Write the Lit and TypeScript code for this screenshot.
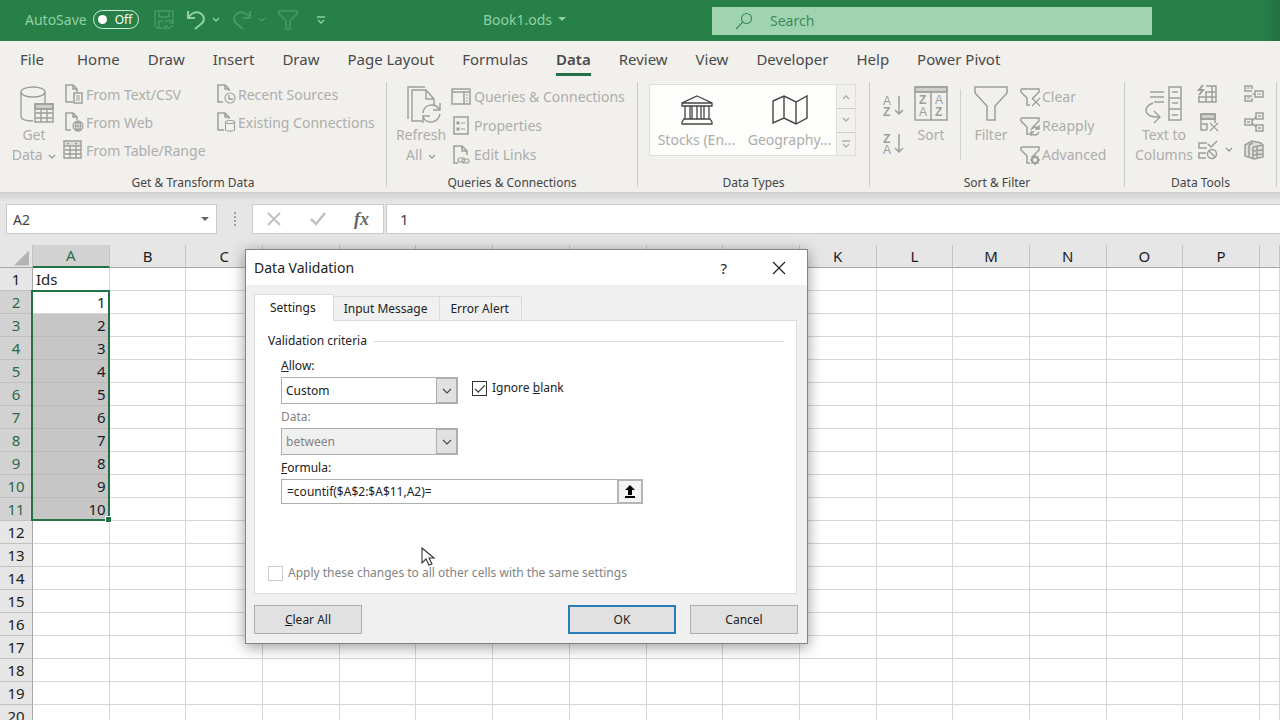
import { LitElement, html, svg, css, nothing } from "lit";
import { customElement, property } from "lit/decorators.js";

const funnelSmall = svg`<path stroke-width="1.500" d="M1 2h18v3l-6 6v2M1 2v3l6 6v7h3"/>`;

const ICONS: Record<string, { w: number; h: number; art: unknown }> = {
  save: { w: 20, h: 20, art: svg`<path stroke-width="1.500" d="M9 18H3l-2-2V1h18v7M5 1v6h10V1M5 18v-7h4M11 13a4 4 0 0 1 7-1M19 9v4h-4M18 15a4 4 0 0 1-7 2M11 20v-4h3"/>` },
  undo: { w: 20, h: 21, art: svg`<path stroke-width="2" d="M2 2v7h7M2 9c3-5 8-7 12-5 5 3 5 8 1 11l-6 5"/>` },
  redo: { w: 20, h: 21, art: svg`<path stroke-width="2" d="M18 2v7h-7M18 9c-3-5-8-7-12-5-5 3-5 8-1 11l6 5"/>` },
  funnel: { w: 20, h: 20, art: svg`<path stroke-width="1.5" d="M1 1h18v3l-7 7v8H8v-8L1 4z"/>` },
  chevron: { w: 8, h: 6, art: svg`<path stroke-width="1.4" d="M1 1l3 3 3-3"/>` },
  chevronUp: { w: 8, h: 6, art: svg`<path stroke-width="1.4" d="M1 5l3-3 3 3"/>` },
  drop: { w: 10, h: 6, art: svg`<path d="M1 1l4 4 4-4"/>` },
  overflow: { w: 10, h: 8, art: svg`<path stroke-width="1.3" d="M1 1h8M2 4l3 3 3-3"/>` },
  caret: { w: 8, h: 5, art: svg`<path fill="currentColor" stroke="none" d="M0 0h8L4 4z"/>` },
  search: { w: 18, h: 18, art: svg`<circle cx="11.500" cy="6.500" r="5"/><path d="M8 10l-7 7"/>` },
  getData: { w: 34, h: 38, art: svg`<g stroke-width="1.400"><ellipse cx="13" cy="6" rx="12" ry="5"/><path d="M1 6v25c1 3 6 4 12 4M25 6v12"/><path fill="#cfcfcd" d="M15 18h18v5H15z"/><path d="M15 18h18v18H15zM15 23h18M15 27h18M15 32h18M21 23v13M27 23v13"/></g>` },
  textFile: { w: 20, h: 20, art: svg`<path stroke-width="1.500" d="M9 18H2V1h7l4 4v3M9 1v4h4"/><path stroke-width="1.500" d="M10 9h8v10h-8z"/><path d="M12 12h4M12 14h4M12 16h4"/>` },
  webFile: { w: 20, h: 20, art: svg`<path stroke-width="1.500" d="M7 18H2V1h7l4 4v3M9 1v4h4"/><circle cx="14" cy="14" r="5"/><path d="M9 14h10M14 9v10M10 11h8M10 17h8"/><ellipse cx="14" cy="14" rx="2.500" ry="5"/>` },
  tableRange: { w: 20, h: 20, art: svg`<path fill="#dededc" stroke="none" d="M0 1h17v5H0z"/><path stroke-width="1.400" d="M0 1h17v17H0zM0 6h17M0 10h17M0 14h17M6 6v12M12 6v12"/><path d="M3 3l1 1 1-1M11 3l1 1 1-1"/>` },
  recent: { w: 20, h: 20, art: svg`<path stroke-width="1.500" d="M7 18H2V1h7l4 4v2M9 1v4h4"/><circle cx="14" cy="14" r="5"/><path stroke-width="1.400" d="M13 11v4h4"/>` },
  existing: { w: 20, h: 20, art: svg`<path stroke-width="1.500" d="M8 18H2V1h7l4 4v2M9 1v4h4"/><ellipse cx="14" cy="10" rx="4.500" ry="1.500"/><path d="M9.500 10v8c1 1.500 8 1.500 9 0v-8"/>` },
  refresh: { w: 34, h: 38, art: svg`<g stroke-width="1.400"><path d="M1 33V1h17"/><path d="M15 35H5V4h14l8 9v6M19 4v9h8"/><path d="M16 27c1-9 12-11 17-3M33 17v7h-7M33 28c-2 9-13 11-17 3M16 37v-7h7"/></g>` },
  queries: { w: 20, h: 20, art: svg`<path stroke-width="1.500" d="M0 2h18v15H0zM0 5h18M12 5v12"/><path d="M14 8h2M14 11h2M14 14h2"/>` },
  properties: { w: 20, h: 20, art: svg`<path stroke-width="1.500" d="M2 1h14v17H2z"/><path fill="currentColor" d="M5 6h2v2H5zM5 12h2v2H5z"/><path d="M9 7h4M9 13h4"/>` },
  editLinks: { w: 20, h: 20, art: svg`<path stroke-width="1.500" d="M6 18H2V1h8l5 5v4M10 1v5h5"/><rect x="6" y="13" width="7" height="4" rx="2"/><rect x="10" y="14" width="7" height="4" rx="2"/>` },
  bank: { w: 34, h: 30, art: svg`<path stroke-width="1.300" d="M17 1l15 7v3H2V8zM2 8h30M5 11v13M10 11v13M12 11v13M17 11v13M21 11v13M24 11v13M29 11v13M4 24h26l2 3v2H2v-2z"/>` },
  map: { w: 36, h: 30, art: svg`<path stroke-width="1.400" d="M1 6l11-5 12 6 11-6v22l-11 6-12-6-11 5zM12 1v22M24 7v22"/>` },
  sortAsc: { w: 20, h: 22, art: svg`<text x="0" y="10">A</text><text class="strong" x="0" y="21">Z</text><path stroke-width="1.500" d="M16 1v18M12 15l4 4 4-4"/>` },
  sortDesc: { w: 20, h: 22, art: svg`<text class="strong" x="0" y="10">Z</text><text x="0" y="21">A</text><path stroke-width="1.500" d="M16 1v18M12 15l4 4 4-4"/>` },
  sort: { w: 34, h: 34, art: svg`<path fill="#cfcfcd" d="M1 1h32v5H1z"/><path stroke-width="1.500" d="M1 1h32v33H1zM1 6h32M17 6v28"/><text class="strong" x="5" y="18">Z</text><text x="5" y="30">A</text><text x="21" y="18">A</text><text class="strong" x="21" y="30">Z</text>` },
  filter: { w: 34, h: 36, art: svg`<path stroke-width="1.500" d="M1 1h32v6L21 20v14h-8V20L1 7z"/>` },
  clear: { w: 20, h: 20, art: svg`${funnelSmall}<path d="M12 11l8 8M20 11l-8 8"/>` },
  reapply: { w: 20, h: 20, art: svg`${funnelSmall}<path stroke-width="1.400" d="M11 14a4.500 4.500 0 0 1 8-1M19 9v4h-4M19 16a4.500 4.500 0 0 1-8 1M11 20v-4h3"/>` },
  advanced: { w: 20, h: 20, art: svg`${funnelSmall}<circle cx="15" cy="15" r="3" stroke-width="2"/><path stroke-width="1.500" d="M15 10v2M15 18v2M10 15h2M18 15h2M11.500 11.500l1 1M17.500 17.500l1 1M18.500 11.500l-1 1M12.500 17.500l-1 1"/>` },
  columns: { w: 38, h: 38, art: svg`<path stroke-width="1.500" d="M5 6h14M5 11h14M9 16h10"/><path stroke-width="1.400" d="M8 17c-10 4-10 14 5 14h2M9 25l6 6-6 6"/><path stroke-width="1.500" d="M24 1h12v33H24zM24 12h12M24 23h12M27 6h6M27 17h6M27 29h6"/>` },
  flashFill: { w: 20, h: 20, art: svg`<path stroke-width="1.500" d="M8 2h10v16H1v-6M14 2v16M8 8h10M8 7v11M1 13h17"/><path stroke-width="2" d="M5 1L1 6h4l-4 5"/>` },
  duplicates: { w: 20, h: 20, art: svg`<path fill="#cfcfcd" stroke-width="1.500" d="M3 2h14v5H3z"/><path stroke-width="1.500" d="M3 2h14v9M3 2v16h6M3 12h6v6M3 7h14"/><path d="M12 11l8 8M20 11l-8 8"/>` },
  validation: { w: 20, h: 20, art: svg`<path stroke-width="1.500" d="M9 3H1v5h8M8 13H1v5h7M10 4l3 3 6-6"/><circle cx="14" cy="14" r="4.500" stroke-width="1.400"/><path stroke-width="1.400" d="M11 11l6 6"/>` },
  consolidate: { w: 20, h: 20, art: svg`<path stroke-width="1.500" d="M8 5V2H1v5h7M8 12H1v5h7v-3M11 7h8v6h-8z"/><path d="M8 10h3M13 10h4M3 4h3M3 14h3"/>` },
  relations: { w: 20, h: 20, art: svg`<path stroke-width="1.500" d="M1 7h7v6H1zM12 1h7v6h-7zM12 13h7v6h-7zM8 9l4-4M8 11l4 4M3 10h3M14 4h3M14 16h3"/>` },
  model: { w: 20, h: 20, art: svg`<path fill="#dededc" stroke="none" d="M1 5l7-4 9 2 2 2v12l-9 2-9-3z"/><path stroke-width="1.500" d="M1 5l7-4 9 2 2 2v12l-9 2-9-3zM5 5v12M5 5l4-2M9 7l10-2M9 7v12M13 6v12M9 11l10-1M9 15l10-1"/>` },
  cross: { w: 16, h: 16, art: svg`<path stroke-width="2" d="M2 2l12 12M14 2L2 14"/>` },
  tick: { w: 18, h: 16, art: svg`<path stroke-width="2.500" d="M2 8l5 5L16 2"/>` },
  close: { w: 12, h: 12, art: svg`<path stroke-width="1.200" d="M0 0l12 12M12 0L0 12"/>` },
  collapse: { w: 12, h: 14, art: svg`<path fill="currentColor" stroke="none" d="M6 0l5 5H8v5H4V5H1zM1 11h10v2H1z"/>` },
  pointer: { w: 14, h: 20, art: svg`<path fill="#fff" stroke="#333" d="M1 1v15l4-4 3 6 3-1-3-6h5z"/>` },
};

const sharedStyles = css`
  :host, *, *::before, *::after { box-sizing: border-box; }
  button, input, select { font: inherit; color: inherit; margin: 0; }
  button { background: none; border: 0; padding: 0; }
`;

@customElement("x-icon")
export class XIcon extends LitElement {
  @property() name = "";
  static styles = css`
    :host { display: inline-flex; flex: none; }
    svg { display: block; overflow: visible; fill: none; stroke: currentColor; stroke-width: 1.1; }
    text { font: 12px "Liberation Sans", sans-serif; fill: currentColor; stroke: none; }
    .strong { font-weight: 700; }
  `;
  render() {
    const i = ICONS[this.name];
    return i ? html`<svg width=${i.w} height=${i.h} viewBox="0 0 ${i.w} ${i.h}" aria-hidden="true">${i.art}</svg>` : nothing;
  }
}

const icon = (name: string) => html`<x-icon name=${name}></x-icon>`;

@customElement("title-bar")
export class TitleBar extends LitElement {
  static styles = [sharedStyles, css`
    :host { display: grid; grid-template-columns: 483fr 229fr 440fr 128fr; align-items: center; height: 41px; flex: none; background: linear-gradient(to left, #236e40, #278048 16px); color: #8fd0a4; font-size: 14px; }
    .quick { display: flex; align-items: center; height: 39px; padding-left: 25px; align-self: start; }
    .quick .switch { display: flex; align-items: center; gap: 8px; width: 46px; height: 19px; margin: 0 15px 0 6px; padding: 0 0 0 4px; border: 1px solid #cdebd5; border-radius: 10px; color: #fff; font-size: 12px; }
    .knob { flex: none; width: 9px; height: 9px; border-radius: 50%; background: #fff; }
    .quick .dim { color: #459a64; }
    .quick button { display: flex; align-items: center; gap: 6px; margin-right: 12px; }
    .quick button:last-child { margin-left: 6px; }
    .file { display: flex; align-items: center; gap: 6px; height: 39px; align-self: start; }
    .search { display: flex; align-items: center; gap: 17px; height: 28px; padding-left: 23px; background: #a0d4b0; color: #3f8a5a; }
    .search input { flex: 1; min-width: 0; background: none; border: 0; outline: 0; padding: 0; }
    .search input::placeholder { color: #3f8a5a; opacity: 1; }
  `];
  render() {
    return html`
      <div class="quick">
        <span>AutoSave</span>
        <button class="switch" role="switch" aria-checked="false" aria-label="AutoSave"><span class="knob"></span>Off</button>
        <button class="dim" aria-label="Save">${icon("save")}</button>
        <button aria-label="Undo">${icon("undo")}${icon("chevron")}</button>
        <button class="dim" aria-label="Redo">${icon("redo")}${icon("chevron")}</button>
        <button class="dim" aria-label="Filter">${icon("funnel")}</button>
        <button aria-label="Customize">${icon("overflow")}</button>
      </div>
      <button class="file">Book1.ods ${icon("caret")}</button>
      <label class="search">${icon("search")}<input type="text" placeholder="Search" aria-label="Search" /></label>
    `;
  }
}

const TABS = ["File", "Home", "Draw", "Insert", "Draw", "Page Layout", "Formulas", "Data", "Review", "View", "Developer", "Help", "Power Pivot"];

@customElement("ribbon-bar")
export class RibbonBar extends LitElement {
  static styles = [sharedStyles, css`
    :host { display: block; flex: none; background: #f1f0ed; border-bottom: 1px solid #d0d0d0; }
    nav { display: flex; gap: 28px; height: 39px; padding: 5px 20px 0; font-size: 15px; color: #4a4a4a; }
    nav a { color: inherit; text-decoration: none; height: 30px; line-height: 27px; white-space: nowrap; }
    nav a:first-child { margin-right: 5px; }
    nav .on { font-weight: 600; border-bottom: 3px solid #217346; }
    .groups { display: grid; grid-template-columns: 387fr 251fr 232fr 255fr 152fr 3px; height: 112px; padding: 2px 0 5px; }
    .group { display: flex; flex-direction: column; min-width: 0; border-right: 1px solid #c9c9c7; }
    .body { display: flex; flex: 1; color: #adadab; font-size: 14px; }
    .caption { height: 16px; line-height: 16px; margin-bottom: -4px; text-align: center; font-size: 12px; color: #444; }
    .big { display: flex; flex-direction: column; align-items: center; align-self: flex-start; padding-top: 4px; line-height: 20px; white-space: nowrap; }
    .big x-icon { height: 38px; margin-bottom: 1px; align-items: flex-start; color: #9d9d9b; }
    .big .line x-icon { height: auto; margin: 0 0 2px 2px; }
    .menu > x-icon { margin-left: 6px; }
    .list { display: flex; flex-direction: column; white-space: nowrap; }
    .list button { display: flex; align-items: center; gap: 2px; height: 28px; }
    .list x-icon { color: #9d9d9b; }
    .loose button { height: 29px; }
    .transform .big { width: 44px; margin-left: 12px; }
    .transform .list { margin: -2px 0 0 8px; width: 152px; }
    .transform .list + .list { margin-left: 0; }
    .queries .big { width: 48px; margin-left: 10px; }
    .queries .list { margin-left: 7px; }
    .gallery { display: grid; grid-template-columns: 1fr 1fr 19px; flex: 1; height: 72px; margin: 2px 13px 0 11px; background: #fdfdfb; border: 1px solid #dddddb; }
    .gallery > button { display: flex; flex-direction: column; align-items: center; gap: 5px; padding-top: 10px; line-height: 20px; white-space: nowrap; }
    .gallery > button x-icon { color: #444; }
    .steps { display: grid; grid-template-rows: repeat(3, 1fr); background: #f1f0ed; border-left: 1px solid #dddddb; }
    .steps button { display: flex; align-items: center; justify-content: center; }
    .steps button + button { border-top: 1px solid #cfcfcd; }
    .order { display: flex; flex-direction: column; gap: 16px; padding: 13px 0 0 13px; color: #9d9d9b; }
    .order button { display: flex; height: 22px; }
    .sort { width: 34px; margin-left: 11px; }
    .filter { width: 34px; margin-left: 13px; }
    .rule { width: 1px; height: 71px; margin: 7px 0 0 12px; background: #d0d0ce; }
    .sorting .list { margin-left: 12px; }
    .tools .big { width: 56px; margin-left: 11px; }
    .tools .list { margin: -2px 0 0 6px; width: 46px; }
    .tools .list + .list { margin-left: 0; width: auto; }
    .tools .list button { gap: 7px; }
  `];

  private item(name: string, label: string) {
    return html`<button>${icon(name)}${label}</button>`;
  }

  render() {
    return html`
      <nav>${TABS.map((t) => html`<a href="#" class=${t === "Data" ? "on" : ""}>${t}</a>`)}</nav>
      <div class="groups">
        <section class="group transform">
          <div class="body">
            <button class="big menu">${icon("getData")}<span>Get</span><span class="line">Data ${icon("chevron")}</span></button>
            <div class="list">${this.item("textFile", "From Text/CSV")}${this.item("webFile", "From Web")}${this.item("tableRange", "From Table/Range")}</div>
            <div class="list">${this.item("recent", "Recent Sources")}${this.item("existing", "Existing Connections")}</div>
          </div>
          <div class="caption">Get &amp; Transform Data</div>
        </section>
        <section class="group queries">
          <div class="body">
            <button class="big menu">${icon("refresh")}<span>Refresh</span><span class="line">All ${icon("chevron")}</span></button>
            <div class="list loose">${this.item("queries", "Queries & Connections")}${this.item("properties", "Properties")}${this.item("editLinks", "Edit Links")}</div>
          </div>
          <div class="caption">Queries &amp; Connections</div>
        </section>
        <section class="group">
          <div class="body">
            <div class="gallery">
              <button>${icon("bank")}Stocks (En...</button>
              <button>${icon("map")}Geography...</button>
              <div class="steps">
                <button aria-label="Previous">${icon("chevronUp")}</button>
                <button aria-label="Next">${icon("chevron")}</button>
                <button aria-label="More">${icon("overflow")}</button>
              </div>
            </div>
          </div>
          <div class="caption">Data Types</div>
        </section>
        <section class="group sorting">
          <div class="body">
            <div class="order">
              <button aria-label="Sort A to Z">${icon("sortAsc")}</button>
              <button aria-label="Sort Z to A">${icon("sortDesc")}</button>
            </div>
            <button class="big sort">${icon("sort")}<span>Sort</span></button>
            <div class="rule"></div>
            <button class="big filter">${icon("filter")}<span>Filter</span></button>
            <div class="list loose">${this.item("clear", "Clear")}${this.item("reapply", "Reapply")}${this.item("advanced", "Advanced")}</div>
          </div>
          <div class="caption">Sort &amp; Filter</div>
        </section>
        <section class="group tools">
          <div class="body">
            <button class="big">${icon("columns")}<span>Text to</span><span>Columns</span></button>
            <div class="list">
              <button aria-label="Flash Fill">${icon("flashFill")}</button>
              <button aria-label="Remove Duplicates">${icon("duplicates")}</button>
              <button aria-label="Data Validation">${icon("validation")}${icon("chevron")}</button>
            </div>
            <div class="list">
              <button aria-label="Consolidate">${icon("consolidate")}</button>
              <button aria-label="Relationships">${icon("relations")}</button>
              <button aria-label="Data Model">${icon("model")}</button>
            </div>
          </div>
          <div class="caption">Data Tools</div>
        </section>
      </div>
    `;
  }
}

@customElement("formula-bar")
export class FormulaBar extends LitElement {
  static styles = [sharedStyles, css`
    :host { display: flex; flex: none; height: 52px; padding: 11px 0 11px 6px; background: linear-gradient(#d4d4d4, #e6e6e6 9px); color: #444; font-size: 14px; }
    .name, .tools, .value { display: flex; align-items: center; background: #fff; border: 1px solid #cbcbcb; }
    .name { width: 211px; padding: 0 7px 0 6px; color: #666; }
    .name input { flex: 1; min-width: 0; border: 0; padding: 0; outline: 0; color: #444; }
    .dots { display: flex; flex-direction: column; justify-content: center; gap: 2px; width: 35px; align-items: center; }
    .dots i { width: 2px; height: 2px; background: #a0a0a0; }
    .tools { width: 132px; padding: 0 14px 0 13px; justify-content: space-between; color: #c0c0c0; }
    .tools button { display: flex; }
    .tools .fx { font: italic bold 18px "Liberation Serif", serif; color: #666; }
    .value { flex: 1; margin-left: 2px; border-right: 0; padding-left: 13px; }
    .value input { width: 100%; border: 0; padding: 0; outline: 0; font-size: 15px; }
  `];
  render() {
    return html`
      <div class="name"><input type="text" aria-label="Name box" .value=${"A2"} />${icon("caret")}</div>
      <div class="dots"><i></i><i></i><i></i><i></i></div>
      <div class="tools">
        <button aria-label="Cancel entry">${icon("cross")}</button>
        <button aria-label="Accept entry">${icon("tick")}</button>
        <button class="fx">fx</button>
      </div>
      <div class="value"><input type="text" aria-label="Formula bar" .value=${"1"} /></div>
    `;
  }
}

const COLS = [..."ABCDEFGHIJKLMNOP"];
const VALUES: Record<number, string> = { 1: "Ids" };
for (let n = 1; n <= 10; n++) VALUES[n + 1] = String(n);

@customElement("sheet-grid")
export class SheetGrid extends LitElement {
  static styles = [sharedStyles, css`
    :host { display: block; flex: 1; min-height: 0; overflow: hidden; background: #fff; font-size: 15px; color: #1c1c1c; }
    table { width: 100%; table-layout: fixed; border-collapse: separate; border-spacing: 0; }
    th, td { height: 23px; padding: 0; line-height: 22px; border-right: 1px solid #d6d6d6; border-bottom: 1px solid #d6d6d6; }
    th { font-weight: 400; background: #e6e6e6; }
    thead th { border-right-color: #c4c4c4; border-bottom-color: #a6a6a6; }
    .corner { width: 33px; }
    .corner span { display: block; width: 15px; height: 15px; margin: 4px 3px 0 auto; background: #b4b4b4; clip-path: polygon(100% 0, 100% 100%, 0 100%); }
    .last { width: 20px; }
    tbody th { border-right-color: #a6a6a6; border-bottom-color: #c0c0c0; }
    .picked { background: #d2d2d2; color: #2a6a49; }
    thead .picked { border-bottom: 2px solid #217346; line-height: 21px; }
    td { padding: 0 3px; }
    .number { text-align: right; }
    .filled { background: #c6c6c6; border-bottom-color: #bcbcbc; }
    .active { position: relative; }
    .range { position: absolute; top: -1px; left: -2px; width: calc(100% + 3px); height: 231px; border: 2px solid #217346; }
    .handle { position: absolute; right: -3px; bottom: -3px; width: 5px; height: 5px; background: #217346; outline: 1px solid #fff; }
  `];
  render() {
    const rows = Array.from({ length: 20 }, (_, i) => i + 1);
    return html`
      <table>
        <thead>
          <tr><th class="corner"><span></span></th>${COLS.map((c) => html`<th class=${c === "A" ? "picked" : ""}>${c}</th>`)}<th class="last"></th></tr>
        </thead>
        <tbody>
          ${rows.map((r) => {
            const inRange = r >= 2 && r <= 11;
            const kind = inRange ? (r === 2 ? "number active" : "number filled") : "";
            return html`<tr>
              <th class=${inRange ? "picked" : ""}>${r}</th>
              <td class=${kind}>${VALUES[r] ?? nothing}${r === 2 ? html`<div class="range"><div class="handle"></div></div>` : nothing}</td>
              ${COLS.map(() => html`<td></td>`)}
            </tr>`;
          })}
        </tbody>
      </table>
    `;
  }
}

@customElement("validation-dialog")
export class ValidationDialog extends LitElement {
  static styles = [sharedStyles, css`
    :host { display: flex; flex-direction: column; width: 563px; border: 1px solid #858585; background: #f0f0f0; box-shadow: 0 3px 14px rgba(0, 0, 0, 0.4); font-size: 12px; line-height: 16px; color: #222; }
    header { display: flex; align-items: center; height: 35px; padding: 0 22px 0 8px; background: #fff; }
    h2 { flex: 1; margin: 0; font-size: 14px; font-weight: 400; }
    header button { display: flex; }
    .help { margin-right: 46px; font-size: 15px; }
    main { display: flex; flex-direction: column; padding: 9px 10px 9px 8px; }
    .tabs { display: flex; align-items: flex-end; }
    .tabs button { height: 24px; border: 1px solid #dcdcdc; border-left: 0; border-bottom: 0; padding: 0 12px 0 10px; }
    .tabs .on { height: 27px; margin-bottom: -1px; background: #fff; padding: 0 17px 0 15px; border-left: 1px solid #dcdcdc; position: relative; }
    .panel { display: flex; flex-direction: column; height: 274px; padding: 12px 12px 12px 13px; background: #fff; border: 1px solid #dcdcdc; }
    .legend { display: flex; align-items: center; gap: 7px; }
    .legend::after { content: ""; flex: 1; height: 1px; background: #dcdcdc; }
    .fields { display: grid; grid-template-columns: 177px auto; column-gap: 14px; justify-content: start; padding: 9px 0 0 13px; }
    .fields > label { grid-column: 1; height: 19px; }
    .combo { grid-column: 1; display: grid; height: 27px; margin-bottom: 5px; border: 1px solid #adadad; }
    .combo select { grid-area: 1 / 1; appearance: none; background: #fff; border: 0; border-radius: 0; outline: 0; padding: 0 25px 0 4px; opacity: 1; }
    .combo x-icon { grid-area: 1 / 1; justify-self: end; width: 21px; align-items: center; justify-content: center; background: #e1e1e1; border: 1px solid #adadad; color: #444; pointer-events: none; }
    .off { color: #838383; }
    .combo.off select { background: #f0f0f0; color: #838383; }
    .check { display: flex; align-items: center; gap: 5px; }
    .fields .check { grid-column: 2; height: 22px; }
    .check input { appearance: none; display: grid; place-items: center; flex: none; width: 15px; height: 15px; background: #fff; border: 1px solid #333; }
    .check input:checked::before { content: ""; width: 10px; height: 5px; border-left: 1px solid #222; border-bottom: 1px solid #222; transform: translateY(-1px) rotate(-45deg); }
    .check input:disabled { border-color: #ccc; }
    .formula { grid-column: 1 / 3; display: flex; width: 362px; height: 25px; }
    .formula input { flex: 1; min-width: 0; border: 1px solid #adadad; border-right: 0; outline: 0; padding: 0 5px; background: #fff; }
    .formula button { display: grid; place-items: center; width: 26px; border: 2px solid #b5b5b5; background: #f4f4f4; color: #000; }
    .apply { margin-top: auto; }
    footer { display: flex; gap: 14px; margin: 11px -1px 0 0; }
    footer button { width: 108px; height: 29px; background: #e1e1e1; border: 1px solid #adadad; }
    footer button:first-child { margin-right: auto; }
    footer .primary { border: 2px solid #2c7db5; }
  `];
  render() {
    return html`
      <header>
        <h2>Data Validation</h2>
        <button class="help" aria-label="Help">?</button>
        <button aria-label="Close">${icon("close")}</button>
      </header>
      <main>
        <div class="tabs" role="tablist">
          <button class="on" role="tab" aria-selected="true">Settings</button>
          <button role="tab">Input Message</button>
          <button role="tab">Error Alert</button>
        </div>
        <div class="panel">
          <div class="legend">Validation criteria</div>
          <div class="fields">
            <label for="allow"><u>A</u>llow:</label>
            <div class="combo"><select id="allow"><option>Custom</option></select>${icon("drop")}</div>
            <label class="check"><input type="checkbox" checked /><span>Ignore <u>b</u>lank</span></label>
            <label class="off" for="data">Data:</label>
            <div class="combo off"><select id="data" disabled><option>between</option></select>${icon("drop")}</div>
            <label for="formula"><u>F</u>ormula:</label>
            <div class="formula">
              <input id="formula" type="text" .value=${"=countif($A$2:$A$11,A2)="} />
              <button aria-label="Collapse dialog">${icon("collapse")}</button>
            </div>
          </div>
          <label class="check off apply"><input type="checkbox" disabled />Apply these changes to all other cells with the same settings</label>
        </div>
        <footer>
          <button><u>C</u>lear All</button>
          <button class="primary">OK</button>
          <button>Cancel</button>
        </footer>
      </main>
    `;
  }
}

@customElement("app-root")
export class AppRoot extends LitElement {
  static styles = css`
    :host { display: flex; flex-direction: column; position: relative; height: 100vh; overflow: hidden; font-family: "Noto Sans", "Open Sans", sans-serif; }
    .dialog { position: absolute; left: 245px; top: 249px; }
    .pointer { position: absolute; left: 421px; top: 547px; }
  `;
  render() {
    return html`
      <title-bar></title-bar>
      <ribbon-bar></ribbon-bar>
      <formula-bar></formula-bar>
      <sheet-grid></sheet-grid>
      <validation-dialog class="dialog" role="dialog" aria-label="Data Validation"></validation-dialog>
      <x-icon class="pointer" name="pointer"></x-icon>
    `;
  }
}
